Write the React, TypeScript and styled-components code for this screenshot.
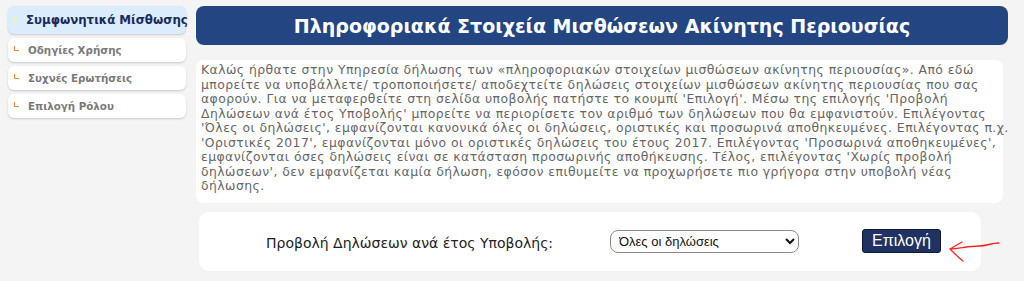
import React from "react";
import styled, { createGlobalStyle } from "styled-components";

const GlobalStyle = createGlobalStyle`
    body {
        margin: 0;
        background: #f4f4f4;
        font-family: "DejaVu Sans", Verdana, sans-serif;
    }
`;

const Page = styled.div`
    display: flex;
    align-items: flex-start;
    gap: 10px;
    padding: 6px 8px;
`;

const Sidebar = styled.nav`
    width: 178px;
    flex-shrink: 0;
    display: flex;
    flex-direction: column;
    gap: 4px;
`;

const MenuItem = styled.div<{ $active?: boolean }>`
    display: flex;
    align-items: center;
    gap: 6px;
    height: ${(p) => (p.$active ? "28px" : "24px")};
    padding-left: 5px;
    border-radius: 6px;
    background: ${(p) => (p.$active ? "#dbecfd" : "#ffffff")};
    box-shadow: 0 1px 2px rgba(0, 0, 0, 0.18);
    color: ${(p) => (p.$active ? "#1c2a5a" : "#7a7a7a")};
    font-size: ${(p) => (p.$active ? "11.8px" : "10.3px")};
    font-weight: bold;
    white-space: nowrap;
`;

const Triangle = styled.span`
    width: 0;
    height: 0;
    margin-right: 1px;
    border-top: 5px solid transparent;
    border-bottom: 5px solid transparent;
    border-left: 6px solid #f3ecc6;
`;

const Bullet = styled.span`
    width: 4px;
    height: 4px;
    border-left: 1px solid #f08c3a;
    border-bottom: 1px solid #f08c3a;
    margin-top: -3px;
    margin-left: 1px;
    margin-right: 3px;
`;

const Main = styled.main`
    width: 812px;
    flex-shrink: 0;
    display: flex;
    flex-direction: column;
`;

const TitleBar = styled.header`
    height: 39px;
    display: flex;
    align-items: center;
    justify-content: center;
    background: #234582;
    border-radius: 8px;
    color: #ffffff;
    font-size: 19px;
    font-weight: bold;
`;

const InfoPanel = styled.section`
    width: 807px;
    box-sizing: border-box;
    margin-top: 15px;
    padding: 3px 4px 9px 5px;
    background: #ffffff;
    border-radius: 8px;
    color: #666666;
    font-size: 12.4px;
    letter-spacing: 0.45px;
    line-height: 14.5px;
`;

const Line = styled.span`
    display: block;
    white-space: nowrap;
`;

const SelectPanel = styled.section`
    position: relative;
    width: 782px;
    height: 59px;
    box-sizing: border-box;
    margin: 9px 0 0 3px;
    padding-left: 67px;
    display: flex;
    align-items: center;
    background: #ffffff;
    border-radius: 10px;
`;

const Label = styled.span`
    width: 289px;
    flex-shrink: 0;
    margin-top: 4px;
    color: #222222;
    font-size: 14px;
    white-space: nowrap;
`;

const Select = styled.select`
    width: 189px;
    height: 23px;
    flex-shrink: 0;
    margin-left: 55px;
    padding: 0 4px;
    border: 1px solid #8a8a8a;
    border-radius: 8px;
    background: #ffffff;
    color: #111111;
    font-family: "Liberation Sans", Arial, sans-serif;
    font-size: 13px;
`;

const ChooseButton = styled.button`
    width: 79px;
    height: 24px;
    flex-shrink: 0;
    margin-left: 63px;
    padding: 0;
    border: 1px solid #0f1a3a;
    border-radius: 3px;
    background: #1f3262;
    color: #ffffff;
    font-family: "Liberation Sans", Arial, sans-serif;
    font-size: 16px;
    cursor: pointer;
`;

const Arrow = styled.svg`
    position: absolute;
    left: 748px;
    top: 27px;
`;

const lines = [
    "Καλώς ήρθατε στην Υπηρεσία δήλωσης των «πληροφοριακών στοιχείων μισθώσεων ακίνητης περιουσίας». Από εδώ",
    "μπορείτε να υποβάλλετε/ τροποποιήσετε/ αποδεχτείτε δηλώσεις στοιχείων μισθώσεων ακίνητης περιουσίας που σας",
    "αφορούν. Για να μεταφερθείτε στη σελίδα υποβολής πατήστε το κουμπί 'Επιλογή'. Μέσω της επιλογής 'Προβολή",
    "Δηλώσεων ανά έτος Υποβολής' μπορείτε να περιορίσετε τον αριθμό των δηλώσεων που θα εμφανιστούν. Επιλέγοντας",
    "'Όλες οι δηλώσεις', εμφανίζονται κανονικά όλες οι δηλώσεις, οριστικές και προσωρινά αποθηκευμένες. Επιλέγοντας π.χ.",
    "'Οριστικές 2017', εμφανίζονται μόνο οι οριστικές δηλώσεις του έτους 2017. Επιλέγοντας 'Προσωρινά αποθηκευμένες',",
    "εμφανίζονται όσες δηλώσεις είναι σε κατάσταση προσωρινής αποθήκευσης. Τέλος, επιλέγοντας 'Χωρίς προβολή",
    "δηλώσεων', δεν εμφανίζεται καμία δήλωση, εφόσον επιθυμείτε να προχωρήσετε πιο γρήγορα στην υποβολή νέας",
    "δήλωσης.",
];

const App: React.FC = () => {
    return (
        <>
            <GlobalStyle />
            <Page>
                <Sidebar>
                    <MenuItem $active>
                        <Triangle />
                        Συμφωνητικά Μίσθωσης
                    </MenuItem>
                    <MenuItem>
                        <Bullet />
                        Οδηγίες Χρήσης
                    </MenuItem>
                    <MenuItem>
                        <Bullet />
                        Συχνές Ερωτήσεις
                    </MenuItem>
                    <MenuItem>
                        <Bullet />
                        Επιλογή Ρόλου
                    </MenuItem>
                </Sidebar>
                <Main>
                    <TitleBar>Πληροφοριακά Στοιχεία Μισθώσεων Ακίνητης Περιουσίας</TitleBar>
                    <InfoPanel>
                        {lines.map((l, i) => (
                            <Line key={i}>{l}</Line>
                        ))}
                    </InfoPanel>
                    <SelectPanel>
                        <Label>Προβολή Δηλώσεων ανά έτος Υποβολής:</Label>
                        <Select defaultValue="all">
                            <option value="all">Όλες οι δηλώσεις</option>
                            <option value="temp">Προσωρινά αποθηκευμένες</option>
                            <option value="none">Χωρίς προβολή δηλώσεων</option>
                        </Select>
                        <ChooseButton>Επιλογή</ChooseButton>
                        <Arrow width="54" height="26" viewBox="0 0 54 26">
                            <path
                                d="M52 4 C44 4 40 7 32 7 C24 7 14 9 3 10 M3 10 L15 3 M3 10 C8 15 12 19 16 22"
                                fill="none"
                                stroke="#ff2020"
                                strokeWidth="1.3"
                                strokeLinecap="round"
                            />
                        </Arrow>
                    </SelectPanel>
                </Main>
            </Page>
        </>
    );
};

export default App;
